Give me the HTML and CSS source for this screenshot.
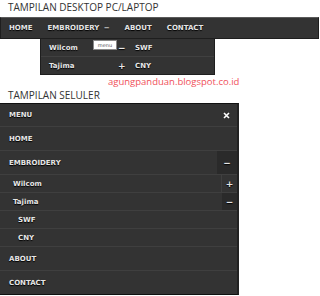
FILE: index.html
```html
<!DOCTYPE html>
<html lang="id">
<head>
    <meta charset="UTF-8">
    <title>Menu Dropdown</title>
    <link rel="stylesheet" href="styles.css">
</head>
<body>

<div class="caption">TAMPILAN DESKTOP PC/LAPTOP</div>

<!-- Desktop -->
<div class="desk">
    <ul class="nav">
        <li>HOME</li>
        <li class="has-sub">EMBROIDERY <span class="sign">&minus;</span></li>
        <li>ABOUT</li>
        <li>CONTACT</li>
    </ul>
    <div class="drop">
        <div class="drop-row">
            <span class="drop-name">Wilcom</span>
            <span class="drop-sign">&minus;</span>
            <span class="drop-sub">SWF</span>
        </div>
        <div class="drop-row">
            <span class="drop-name">Tajima</span>
            <span class="drop-sign">+</span>
            <span class="drop-sub">CNY</span>
        </div>
        <span class="tip">menu</span>
    </div>
</div>

<div class="site">agungpanduan.blogspot.co.id</div>

<div class="caption mobile-cap">TAMPILAN SELULER</div>

<!-- Seluler -->
<div class="mobile">
    <div class="m-row top first">
        <span>MENU</span>
        <svg class="close" width="7" height="7" viewBox="0 0 7 7">
            <path d="M1 1 L6 6 M6 1 L1 6" stroke="#fff" stroke-width="1.6"/>
        </svg>
    </div>
    <div class="m-row top"><span>HOME</span></div>
    <div class="m-row top">
        <span>EMBROIDERY</span>
        <span class="toggle big">&minus;</span>
    </div>
    <div class="m-row sub">
        <span>Wilcom</span>
        <span class="toggle plus">+</span>
    </div>
    <div class="m-row sub">
        <span>Tajima</span>
        <span class="toggle">&minus;</span>
    </div>
    <div class="m-row sub2"><span>SWF</span></div>
    <div class="m-row sub2"><span>CNY</span></div>
    <div class="m-row top"><span>ABOUT</span></div>
    <div class="m-row top last"><span>CONTACT</span></div>
</div>

</body>
</html>
```

FILE: styles.css
```css
body {
    margin: 0;
    background: #fff;
    font-family: "Open Sans", sans-serif;
}
.caption {
    color: #333;
    font-size: 10px;
    letter-spacing: 0;
    padding: 1px 0 0 8px;
    height: 15px;
    line-height: 13px;
}
.desk {
    position: relative;
    margin-top: 1px;
}
.nav {
    list-style: none;
    margin: 0;
    padding: 0 0 0 8px;
    width: 309px;
    height: 20px;
    display: flex;
    align-items: center;
    gap: 15px;
    background: #333;
    border: 1px solid #1e1e1e;
    border-top-color: #5a5a5a;
}
.nav li, .m-row span, .drop-row span {
    font-family: "DejaVu Sans", sans-serif;
    font-weight: bold;
    font-size: 7px;
    color: #e6e6e6;
    text-shadow: 0 1px 1px #000;
}
.nav .sign {
    margin-left: 2px;
}
.drop {
    position: absolute;
    left: 40px;
    top: 22px;
    width: 173px;
    background: #333;
    border: 1px solid #1e1e1e;
    border-top: none;
}
.drop-row {
    height: 17px;
    display: flex;
    align-items: center;
    padding-left: 8px;
    border-bottom: 1px solid #404040;
}
.drop-row:last-of-type {
    border-bottom: none;
}
.drop-name {
    width: 69px;
}
.drop-row .drop-sign {
    width: 17px;
    font-size: 9px;
}
.tip {
    position: absolute;
    left: 52px;
    top: 1px;
    width: 22px;
    height: 8px;
    background: #fff;
    border: 1px solid #888;
    color: #555;
    font-family: "DejaVu Sans", sans-serif;
    font-size: 5px;
    line-height: 8px;
    text-align: center;
}
.site {
    color: #f0505a;
    font-size: 9.5px;
    padding: 35px 0 0 108px;
    height: 15px;
    line-height: 15px;
}
.mobile-cap {
    padding-top: 0;
    height: 14px;
}
.mobile {
    width: 237px;
    background: #333;
    border-top: 1px solid #111;
    border-right: 2px solid #222;
    border-bottom: 1px solid #111;
}
.m-row {
    display: flex;
    align-items: center;
    justify-content: space-between;
    border-bottom: 1px solid #3f3f3f;
    padding-left: 9px;
}
.m-row.top {
    height: 23px;
}
.m-row.first {
    height: 22px;
}
.m-row.sub {
    height: 17px;
    padding-left: 13px;
}
.m-row.sub2 {
    height: 17px;
    padding-left: 18px;
}
.m-row.last {
    border-bottom: none;
}
.m-row .close {
    margin-right: 7px;
}
.m-row .toggle {
    width: 15px;
    height: 100%;
    display: flex;
    align-items: center;
    justify-content: center;
    background: #2a2a2a;
    font-size: 9px;
}
.m-row .toggle.big {
    width: 20px;
}
.m-row .toggle.plus {
    background: #333;
    border-left: 1px solid #3f3f3f;
}
```
